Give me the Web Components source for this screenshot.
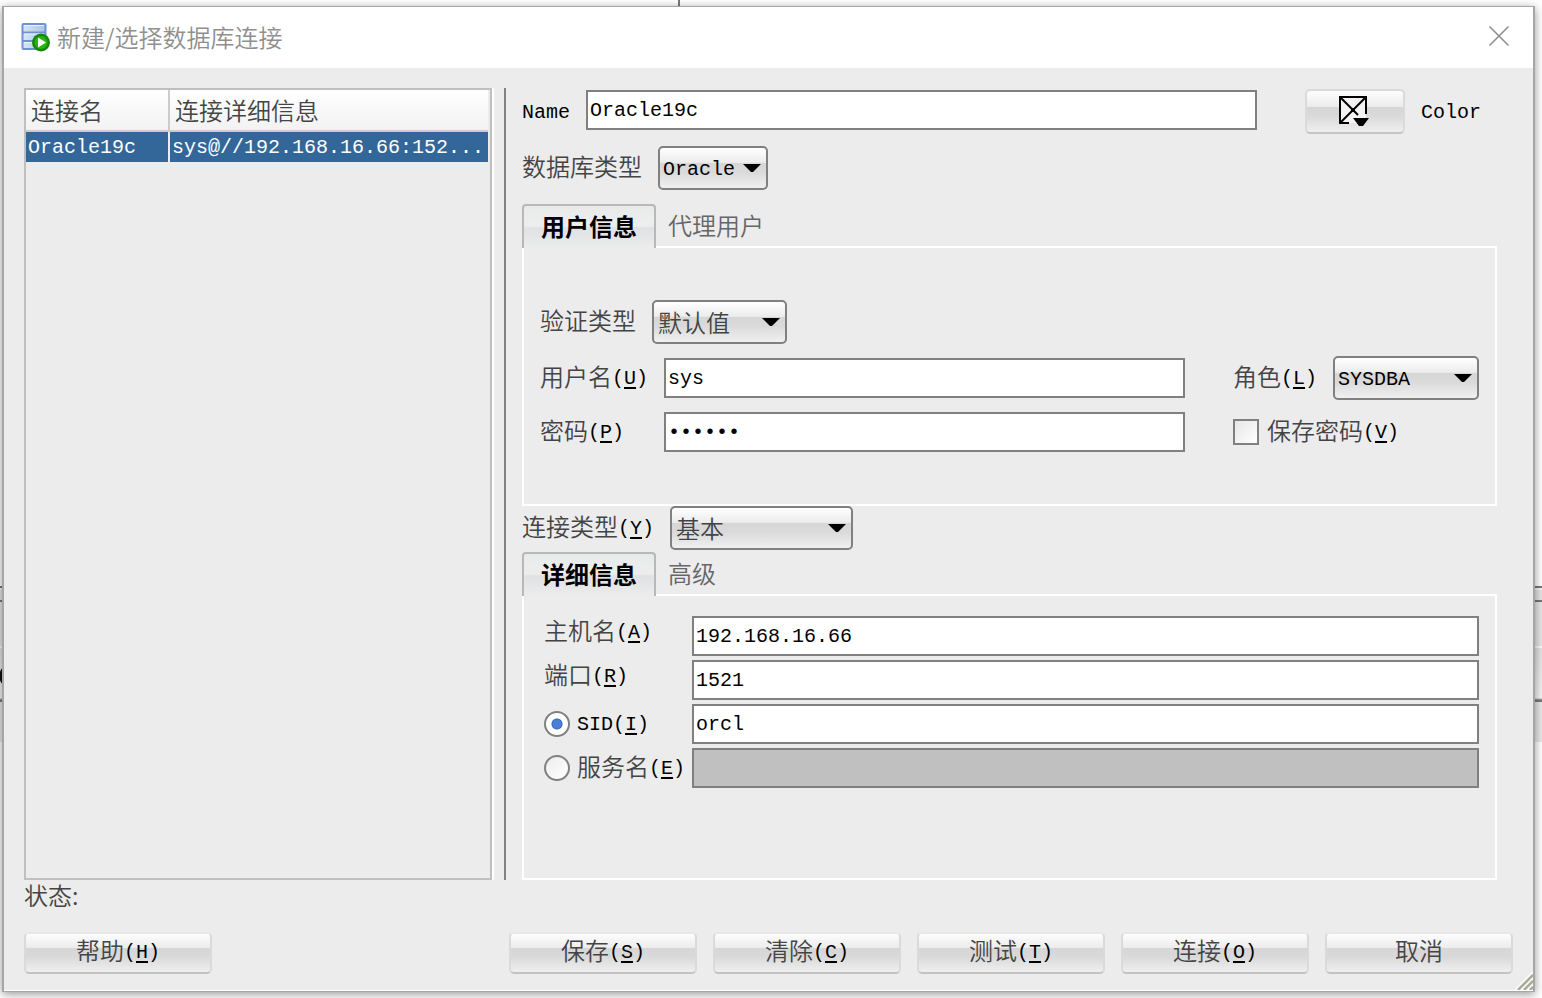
<!DOCTYPE html>
<html lang="zh-CN">
<head>
<meta charset="utf-8">
<title>新建/选择数据库连接</title>
<style>
  html { background: #fff; }
  body {
    margin: 0;
    display: flex;
    min-height: 100vh;
    font: 350 24px/32px "Noto Sans CJK SC", sans-serif;
    color: #444;
  }
  connection-dialog { flex: 1; }
  .form { display: flex; flex-direction: column; flex: 1; min-width: 0; padding-right: 16px; }
  user-info, connection-details { width: 100%; }
  .grow { flex: 1; }
</style>
</head>
<body>
<desk-backdrop></desk-backdrop>
<connection-dialog>
  <span slot="title">新建/选择数据库连接</span>
  <connection-list slot="list"></connection-list>
  <div class="form">
    <name-row></name-row>
    <choice-row value="Oracle" size="110">数据库类型</choice-row>
    <tab-pane style="margin-top:14px">
      <span slot="active">用户信息</span><span slot="other">代理用户</span>
      <user-info></user-info>
    </tab-pane>
    <choice-row value="基本" size="183">连接类型<access-key>Y</access-key></choice-row>
    <tab-pane class="grow" style="margin-top:2px">
      <span slot="active">详细信息</span><span slot="other">高级</span>
      <connection-details></connection-details>
    </tab-pane>
  </div>
  <span slot="status">状态:</span>
  <action-button slot="help">帮助<access-key>H</access-key></action-button>
  <action-button slot="actions">保存<access-key>S</access-key></action-button>
  <action-button slot="actions">清除<access-key>C</access-key></action-button>
  <action-button slot="actions">测试<access-key>T</access-key></action-button>
  <action-button slot="actions">连接<access-key>O</access-key></action-button>
  <action-button slot="actions">取消</action-button>
</connection-dialog>

<script>
const controls = `
  * { box-sizing: border-box; }
  label { white-space: nowrap; padding-bottom: 4px; }
  .latin { font: 20px/32px "Liberation Mono", monospace; color: #000; }
  input.text {
    width: 100%; min-width: 0; height: 40px; margin: 0; padding: 0 2px;
    border: 2px solid #808080; border-radius: 0; background: #fff; outline: 0;
    font: 20px/32px "Liberation Mono", monospace; color: #000;
  }
  input.text:disabled { background: #c0c0c0; }
`;

const define = (name, css, html, setup) => customElements.define(name, class extends HTMLElement {
  constructor() {
    super();
    this.attachShadow({ mode: "open" }).innerHTML = `<style>${css}</style>${html}`;
  }
  connectedCallback() { if (setup) setup(this, this.shadowRoot); }
});

/* The application window that shows at the dialog's edges. */
define("desk-backdrop", `
  :host {
    position: absolute; inset: 0; z-index: -1; overflow: hidden;
    background: linear-gradient(#fff 586px, #777 586px 588px, #f5f5f5 588px 590px, #e4e4e4 590px 600px,
      #777 600px 602px, #e6e6e6 602px 646px, #fafafa 646px 648px, #e2e2e2 648px, #f4f4f4 698px,
      #777 700px 702px, #e8e8e8 702px 742px, #fff 742px);
  }
  svg { position: absolute; left: 0; top: 0; }
`, `<svg width="700" height="700" aria-hidden="true"><path d="M679 0V8" stroke="#777" stroke-width="2"/><ellipse cx="4" cy="676" rx="3" ry="7" fill="none" stroke="#111" stroke-width="3"/></svg>`);

/* A mnemonic letter in brackets. */
define("access-key", `
  :host { display: inline; vertical-align: 2px; font: 20px/24px "Liberation Mono", monospace; color: #000; }
  u { text-decoration-thickness: 2px; text-underline-offset: 3px; text-decoration-skip-ink: none; }
`, `(<u><slot></slot></u>)`);

define("connection-dialog", `
  :host {
    display: flex; flex-direction: column; position: relative; box-sizing: border-box;
    margin: 6px 7px 6px 2px; background: #ececec;
    border: solid #a6a6a6; border-width: 1px 2px 1px 2px;
    box-shadow: 0 2px 9px rgba(0,0,0,.42);
  }
  header { display: flex; align-items: center; box-sizing: border-box; height: 61px; padding: 0 23px 2px 16px; background: #fff; color: #8f8f8f; }
  header svg { display: block; }
  .title { flex: 1; margin-left: 5px; }
  .close { padding: 0 0 2px; border: 0; background: none; }
  main { flex: 1; display: flex; padding: 20px 20px 0; }
  .split { width: 2px; margin: 0 16px 0 10px; background: #808080; }
  .status { box-sizing: border-box; padding: 0 20px; height: 32px; line-height: 30px; }
  footer { display: flex; justify-content: space-between; padding: 20px 20px 16px; border-bottom: 1px solid #fff; }
  .actions { display: flex; gap: 16px; }
  .grip { position: absolute; right: 0; bottom: 1px; display: block; }
`, `
  <header>
    <svg width="32" height="32" viewBox="0 0 32 32" aria-hidden="true">
      <defs><linearGradient id="d" x2="1"><stop stop-color="#d9e6f8"/><stop offset="1" stop-color="#a9c3ea"/></linearGradient></defs>
      <rect x="2.500" y="3" width="23" height="25" rx="1" fill="url(#d)" stroke="#6c92d4" stroke-width="2"/>
      <path d="M3 11.500H25M3 20H25" stroke="#6c92d4" stroke-width="2"/>
      <path d="M4 4.500H24M4 13H24M4 21.500H24" stroke="#edf3fc" stroke-width="1"/>
      <circle cx="21" cy="21.500" r="9" fill="#15870b"/><circle cx="21" cy="21.500" r="6.500" fill="#24b60c"/>
      <path d="M18 16.500L26 21.500L18 26.500Z" fill="#fff"/>
    </svg>
    <span class="title"><slot name="title"></slot></span>
    <button class="close" aria-label="关闭"><svg width="22" height="22" viewBox="0 0 22 22"><path d="M1.500 1.500L20.500 20.500M20.500 1.500L1.500 20.500" stroke="#8a8a8a" stroke-width="1.500"/></svg></button>
  </header>
  <main><slot name="list"></slot><div class="split"></div><slot></slot></main>
  <div class="status"><slot name="status"></slot></div>
  <footer><slot name="help"></slot><div class="actions"><slot name="actions"></slot></div></footer>
  <svg class="grip" width="18" height="18" viewBox="0 0 18 18" aria-hidden="true">
    <path d="M0 18L18 0M6 18L18 6M12 18L18 12" stroke="#fff" stroke-width="1.500"/>
    <path d="M3 18L18 3M9 18L18 9M15 18L18 15" stroke="#aaac96" stroke-width="2.500"/>
  </svg>
`);

define("connection-list", `
  :host { display: block; box-sizing: border-box; flex: 0 0 470px; padding-right: 2px; background: linear-gradient(#fff,#fff) right / 2px 100% no-repeat; }
  .box { box-sizing: border-box; height: 100%; border: 2px solid #bfbfbf; padding-right: 2px; background: #ececec; }
  table { width: 100%; table-layout: fixed; border-collapse: separate; border-spacing: 0; }
  th, td { box-sizing: border-box; text-align: left; white-space: nowrap; overflow: hidden; }
  th { height: 42px; padding: 0 5px; font-weight: inherit; background: linear-gradient(#fff,#f2f2f2); border-bottom: 2px solid #ccc; }
  th:first-child { width: 144px; border-right: 2px solid #ccc; }
  td { height: 30px; padding: 2px 2px 0; background: #336799; color: #fff; font: 20px/28px "Liberation Mono", monospace; }
  td:first-child { border-right: 2px solid #ececec; }
`, `
  <div class="box"><table>
    <thead><tr><th>连接名</th><th>连接详细信息</th></tr></thead>
    <tbody><tr><td>Oracle19c</td><td>sys@//192.168.16.66:152...</td></tr></tbody>
  </table></div>
`);

define("name-row", controls + `
  :host { display: flex; align-items: center; height: 46px; margin: 0 16px 12px 0; }
  input.text { flex: 1; margin: 0 48px 2px 16px; }
  button {
    width: 100px; height: 45px; padding: 0; border: 2px solid #dadada; border-bottom-color: #c4c4c4; border-radius: 5px;
    background: linear-gradient(#fdfdfd, #ececec 38%, #d6d6d6 40%, #d9d9d9 60%, #efefef);
  }
  svg { display: block; margin: 0 auto; }
  label.latin, .color { padding: 4px 0 0; }
  .color { margin-left: 16px; }
`, `
  <label class="latin" for="name">Name</label>
  <input class="text" id="name" value="Oracle19c">
  <button aria-labelledby="color"><svg width="32" height="30" viewBox="0 0 32 30" aria-hidden="true">
    <path d="M1 1H27V27H1Z" fill="#f6f2f4"/><path d="M10 27H1V1H27V18" fill="none" stroke="#000" stroke-width="2"/>
    <path d="M2 2L19 19M26 2L2 26" stroke="#000" stroke-width="2"/><path d="M12 12h4v4h-4z"/><path d="M14 22H30L24 30H20Z"/>
  </svg></button>
  <span class="latin color" id="color">Color</span>
`);

/* A label followed by a drop-down. */
define("choice-row", controls + `
  :host { display: flex; align-items: center; gap: 16px; height: 44px; }
  .box { display: grid; }
  select {
    grid-area: 1 / 1; appearance: none; width: 100%; height: 44px; margin: 0; padding: 0 26px 0 4px;
    border: 2px solid #808080; border-radius: 5px; outline: 0; color: #444;
    background: linear-gradient(#fff, #ececec 36%, #d6d6d6 38%, #dadada 60%, #f0f0f0);
    font: 350 24px/32px "Noto Sans CJK SC", sans-serif;
  }
  select.latin { padding-top: 4px; padding-left: 3px; font: 20px/32px "Liberation Mono", monospace; color: #000; }
  svg { grid-area: 1 / 1; place-self: center end; margin-right: 7px; pointer-events: none; }
`, `
  <label for="s"><slot></slot></label>
  <div class="box"><select id="s"><option></option></select>
  <svg width="18" height="8" viewBox="0 0 18 8" aria-hidden="true"><path d="M0 0H18L10 8H8Z"/></svg></div>
`, (host, root) => {
  const value = host.getAttribute("value");
  root.querySelector("option").textContent = value;
  root.querySelector("select").classList.toggle("latin", /^[A-Za-z]+$/.test(value));
  root.querySelector(".box").style.width = host.getAttribute("size") + "px";
});

define("tab-pane", `
  :host { display: flex; flex-direction: column; }
  .tabs { display: flex; height: 44px; margin-bottom: -2px; position: relative; }
  button { margin: 0; padding: 0 12px 2px; border: 0; background: none; font: inherit; color: #666; }
  .active {
    width: 134px; padding: 0 0 2px; font-weight: 700; color: #000;
    border: solid #b8b8b8; border-width: 2px 2px 0; border-radius: 4px 4px 0 0;
    background: linear-gradient(#e8eaea, #ededed 48%, #dfe1e3 52%, #ececec);
  }
  .pane { flex: 1; border: 2px solid #fff; }
`, `
  <div class="tabs" role="tablist">
    <button class="active" role="tab" aria-selected="true"><slot name="active"></slot></button>
    <button role="tab" aria-selected="false"><slot name="other"></slot></button>
  </div>
  <div class="pane" role="tabpanel"><slot></slot></div>
`);

define("user-info", controls + `
  :host { display: grid; box-sizing: border-box; padding: 52px 16px; gap: 12px 0;
    grid-template: 44px 44px 40px / 124px 1fr 294px; align-items: center; }
  .auth { grid-column: 1 / -1; }
  .side { margin-left: 48px; }
  .check { display: flex; align-items: center; gap: 8px; }
  input[type=checkbox] { appearance: none; width: 26px; height: 26px; margin: 0; border: 2px solid #808080; background: linear-gradient(135deg, #e6e6e6, #fff); }
`, `
  <choice-row class="auth" value="默认值" size="135">验证类型</choice-row>
  <label for="user">用户名<access-key>U</access-key></label>
  <input class="text" id="user" value="sys">
  <choice-row class="side" value="SYSDBA" size="146">角色<access-key>L</access-key></choice-row>
  <label for="pw">密码<access-key>P</access-key></label>
  <input class="text" id="pw" type="password" value="secret">
  <div class="side check"><input type="checkbox" id="save"><label for="save">保存密码<access-key>V</access-key></label></div>
`);

define("connection-details", controls + `
  :host { display: grid; box-sizing: border-box; padding: 20px 16px 20px 20px; gap: 4px 0;
    grid-template-columns: 148px 1fr; grid-auto-rows: 40px; }
  .plain { line-height: 28px; }
  .radio { display: flex; align-items: center; gap: 7px; }
  input[type=radio] { appearance: none; flex: none; width: 26px; height: 26px; margin: 0; border: 2px solid #808080; border-radius: 50%; background: linear-gradient(135deg, #ececec, #fff); }
  input[type=radio]:checked { background: radial-gradient(circle, #4a7fd6 0 4px, #3a68bd 5px, #fff 6px); }
  .sid { vertical-align: 2px; line-height: 24px; }
`, `
  <label class="plain" for="host">主机名<access-key>A</access-key></label>
  <input class="text" id="host" value="192.168.16.66">
  <label class="plain" for="port">端口<access-key>R</access-key></label>
  <input class="text" id="port" value="1521">
  <div class="radio"><input type="radio" name="target" id="r1" checked><label for="r1"><span class="latin sid">SID</span><access-key>I</access-key></label></div>
  <input class="text" aria-label="SID" value="orcl">
  <div class="radio"><input type="radio" name="target" id="r2"><label for="r2">服务名<access-key>E</access-key></label></div>
  <input class="text" aria-label="服务名" disabled>
`);

define("action-button", `
  :host { display: block; }
  button {
    display: block; width: 188px; height: 42px; margin: 0; padding: 0 0 6px; color: #444; font: inherit; line-height: 32px;
    border: 2px solid #dadada; border-top-color: #e8e8e8; border-bottom-color: #c2c2c2; border-radius: 5px;
    background: linear-gradient(#fdfdfd, #ececec 36%, #d6d6d6 38%, #d9d9d9 60%, #efefef);
  }
`, `<button><slot></slot></button>`);
</script>
</body>
</html>
